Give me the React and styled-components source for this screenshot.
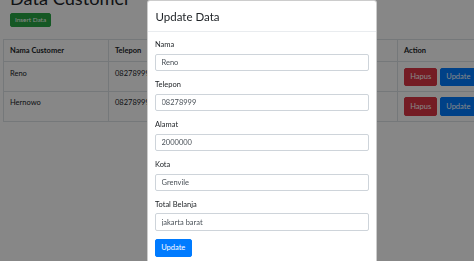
import React from "react";
import styled, { createGlobalStyle } from "styled-components";

const GlobalStyle = createGlobalStyle`
  html, body {
    margin: 0;
    padding: 0;
    overflow: hidden;
    background: #ffffff;
    font-family: "Lato", "Liberation Sans", sans-serif;
    color: #212529;
  }
  * { box-sizing: border-box; }
`;

const Page = styled.div`
  width: 520px;
  padding: 0 0 0 3px;
`;

const TopArea = styled.div`
  display: flex;
  flex-direction: column;
  align-items: flex-start;
  padding-left: 7px;
`;

const Heading = styled.h1`
  margin: -12px 0 3px 0;
  font-size: 18.2px;
  font-weight: 400;
  line-height: 1.2;
  color: #212529;
`;

const Button = styled.button`
  display: block;
  border: 1px solid ${(p) => p.$bg};
  background: ${(p) => p.$bg};
  color: #ffffff;
  font-family: inherit;
  font-size: ${(p) => (p.$small ? "6.4px" : "7.5px")};
  line-height: 1.5;
  padding: ${(p) => (p.$small ? "1.2px 4px" : "2.5px 5.2px")};
  border-radius: 2px;
  cursor: pointer;
  margin: 0;
`;

const Table = styled.table`
  margin-top: 12px;
  border-collapse: collapse;
  table-layout: fixed;
  width: 487px;
  font-size: 7.5px;
  line-height: 1.5;
`;

const Th = styled.th`
  width: ${(p) => p.$w}px;
  text-align: left;
  font-weight: 700;
  padding: 5.2px 6px;
  border: 1px solid #dee2e6;
  vertical-align: top;
  white-space: nowrap;
  overflow: hidden;
`;

const Td = styled.td`
  padding: 5.2px 6px;
  border: 1px solid #dee2e6;
  vertical-align: top;
  white-space: nowrap;
  overflow: hidden;
`;

const Actions = styled.div`
  display: flex;
  gap: 2.7px;
`;

const Backdrop = styled.div`
  position: fixed;
  inset: 0;
  background: rgba(0, 0, 0, 0.47);
  z-index: 10;
`;

const Modal = styled.div`
  position: fixed;
  top: 0;
  left: 147px;
  width: 230px;
  background: #ffffff;
  border: 1px solid rgba(0, 0, 0, 0.2);
  border-radius: 3px;
  z-index: 20;
`;

const ModalHeader = styled.div`
  padding: 6.6px 7.5px;
  border-bottom: 1px solid #e9ecef;
`;

const ModalTitle = styled.h5`
  margin: 0;
  font-size: 11.5px;
  font-weight: 400;
  line-height: 1.5;
  color: #212529;
`;

const ModalBody = styled.div`
  display: flex;
  flex-direction: column;
  align-items: flex-start;
  padding: 7px 7px 8px 7px;
`;

const Group = styled.div`
  width: 100%;
  margin-bottom: 8px;
`;

const Label = styled.label`
  display: block;
  font-size: 7.5px;
  line-height: 11.25px;
  margin-bottom: 3.3px;
  color: #212529;
`;

const Input = styled.input`
  display: block;
  width: 100%;
  height: 17.3px;
  padding: 0 5.5px;
  font-family: inherit;
  font-size: 7.5px;
  color: #495057;
  background: #ffffff;
  border: 1px solid #ced4da;
  border-radius: 2px;
  outline: none;
`;

const columns = [
  { label: "Nama Customer", w: 105 },
  { label: "Telepon", w: 70 },
  { label: "Alamat", w: 70 },
  { label: "Kota", w: 70 },
  { label: "Total Belanja", w: 79 },
  { label: "Action", w: 93 },
];

const rows = [
  ["Reno", "08278999", "2000000", "Grenvile", "jakarta barat"],
  ["Hernowo", "08278999", "1500000", "Grenvile", "jakarta timur"],
];

const fields = [
  ["Nama", "Reno"],
  ["Telepon", "08278999"],
  ["Alamat", "2000000"],
  ["Kota", "Grenvile"],
  ["Total Belanja", "jakarta barat"],
];

export default function App() {
  return (
    <>
      <GlobalStyle />
      <Page>
        <TopArea>
          <Heading>Data Customer</Heading>
          <Button $bg="#28a745" $small>Insert Data</Button>
        </TopArea>
        <Table>
          <thead>
            <tr>
              {columns.map((c) => (
                <Th key={c.label} $w={c.w}>{c.label}</Th>
              ))}
            </tr>
          </thead>
          <tbody>
            {rows.map((r) => (
              <tr key={r[0]}>
                {r.map((v, i) => (
                  <Td key={i}>{v}</Td>
                ))}
                <Td>
                  <Actions>
                    <Button $bg="#dc3545">Hapus</Button>
                    <Button $bg="#007bff">Update</Button>
                  </Actions>
                </Td>
              </tr>
            ))}
          </tbody>
        </Table>
      </Page>
      <Backdrop />
      <Modal>
        <ModalHeader>
          <ModalTitle>Update Data</ModalTitle>
        </ModalHeader>
        <ModalBody>
          {fields.map(([l, v]) => (
            <Group key={l}>
              <Label>{l}</Label>
              <Input defaultValue={v} />
            </Group>
          ))}
          <Button $bg="#007bff">Update</Button>
        </ModalBody>
      </Modal>
    </>
  );
}
